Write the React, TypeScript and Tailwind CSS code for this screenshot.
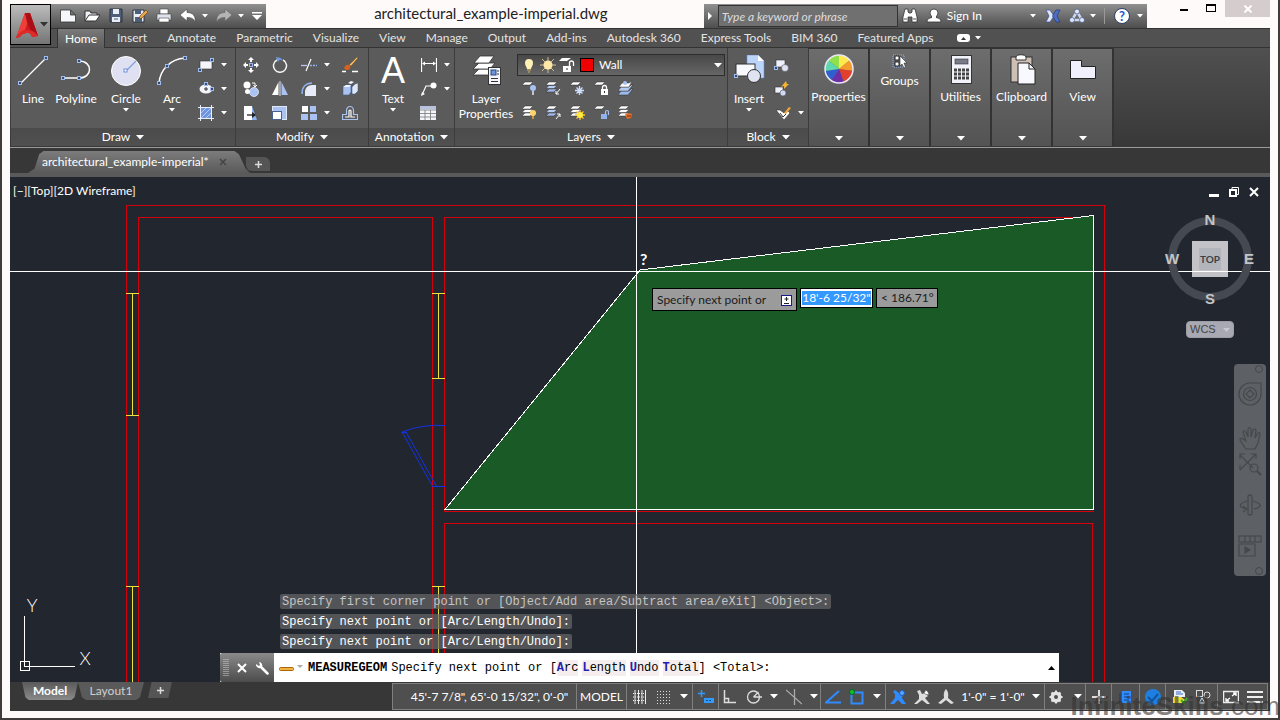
import { ReactNode } from "react";
import clsx from "clsx";

const ribbonTabs = [
  "Home",
  "Insert",
  "Annotate",
  "Parametric",
  "Visualize",
  "View",
  "Manage",
  "Output",
  "Add-ins",
  "Autodesk 360",
  "Express Tools",
  "BIM 360",
  "Featured Apps",
];

/* ---------- icon helpers ---------- */

function Icon({ size = 16, children }: { size?: number; children: ReactNode }) {
  return (
    <svg
      width={size}
      height={size}
      viewBox={`0 0 ${size} ${size}`}
      fill="none"
      className="shrink-0"
      aria-hidden="true"
    >
      {children}
    </svg>
  );
}

function Caret({ large = false }: { large?: boolean }) {
  return large ? (
    <svg width="8" height="5" viewBox="0 0 8 5" className="shrink-0" aria-hidden="true">
      <path d="M0 0h8L4 4.5z" fill="#fff" />
    </svg>
  ) : (
    <svg width="6" height="4" viewBox="0 0 6 4" className="shrink-0" aria-hidden="true">
      <path d="M0 0h6L3 3.5z" fill="#fff" />
    </svg>
  );
}

function Grip({ x, y }: { x: number; y: number }) {
  return <rect x={x + 0.5} y={y + 0.5} width="3" height="3" fill="#3c4a66" stroke="#9dbcf5" />;
}

/* a stack of sheets used by all layer tools */
function Sheets({ count = 3, blue = false }: { count?: number; blue?: boolean }) {
  return (
    <>
      {count > 2 && <path d="M4 9h8l-3 3H1z" fill={blue ? "#9db8ea" : "#fff"} stroke="#333" strokeWidth=".5" />}
      {count > 1 && <path d="M4 5.500h8l-3 3H1z" fill={blue ? "#b9cdf3" : "#fff"} stroke="#333" strokeWidth=".5" />}
      <path d="M4 2h8L9 5H1z" fill="#fff" stroke="#333" strokeWidth=".5" />
    </>
  );
}

/* ---------- quick access toolbar ---------- */

const quickTools: { name: string; icon: ReactNode }[] = [
  {
    name: "New",
    icon: <path d="M0.500 2h10l5 5v7H0.500zM10.500 2v5h5" fill="#f6f7fb" stroke="#333" strokeWidth=".8" />,
  },
  {
    name: "Open",
    icon: (
      <>
        <path d="M1 13V3h5l1 2h6v3" fill="#eef0f6" stroke="#333" />
        <path d="M1 13L5 7h11l-4 6z" fill="#fff" stroke="#333" />
      </>
    ),
  },
  {
    name: "Save",
    icon: (
      <>
        <path d="M2 1h12v13H2z" fill="#4d5f78" stroke="#2c3440" />
        <path d="M5 1h6v5H5zM4 9h8v5H4z" fill="#e9edf5" />
        <path d="M6 11h4" stroke="#4d5f78" />
      </>
    ),
  },
  {
    name: "Save As",
    icon: (
      <>
        <path d="M1 2h11v12H1z" fill="#e9edf5" stroke="#2c3440" />
        <path d="M3 2h6v4H3zM3 9h7v5H3z" fill="#4d5f78" />
        <path d="M7 11l1-3 6-6 2 2-6 6z" fill="#e9a64a" stroke="#5e3d12" strokeWidth=".6" />
      </>
    ),
  },
  {
    name: "Plot",
    icon: (
      <>
        <path d="M4 1h8v5H4z" fill="#fff" stroke="#444" strokeWidth=".6" />
        <path d="M1 6h14v6H1z" fill="#dfe3ec" stroke="#444" strokeWidth=".6" />
        <path d="M3 10h10v4H3z" fill="#fff" stroke="#444" strokeWidth=".6" />
      </>
    ),
  },
];

function QuickAccess() {
  return (
    <div className="flex h-6 items-center gap-2 bg-linear-to-b from-[#909090] to-[#4e4e4e] pr-1 pl-[50px]">
      {quickTools.map((tool) => (
        <button key={tool.name} aria-label={tool.name}>
          <Icon>{tool.icon}</Icon>
        </button>
      ))}
      <button aria-label="Undo" className="flex items-center gap-1.5">
        <Icon>
          <path
            d="M0 7l7-6v3.500c6 0 9 4 8 9.500-1-3-3-4.500-8-4.500V13z"
            fill="#fff"
            stroke="#444"
            strokeWidth=".6"
          />
        </Icon>
        <Caret />
      </button>
      <button aria-label="Redo" className="flex items-center gap-1.5">
        <Icon>
          <path
            d="M16 7L9 1v3.500c-6 0-9 4-8 9.500 1-3 3-4.500 8-4.500V13z"
            fill="#b4b4b4"
            stroke="#666"
            strokeWidth=".6"
          />
        </Icon>
        <Caret />
      </button>
      <button aria-label="Customize toolbar">
        <svg width="10" height="8" viewBox="0 0 10 8">
          <path d="M0 0h10v1.500H0zM0 3h10L5 8z" fill="#fff" />
        </svg>
      </button>
    </div>
  );
}

function TitleBar() {
  return (
    <header className="flex h-7 items-start">
      <div className="mt-1">
        <QuickAccess />
      </div>
      <h1 className="flex-1 pl-3 text-center text-[15px] leading-[26px] whitespace-nowrap text-[#222]">
        architectural_example-imperial.dwg
      </h1>
      <div className="mt-1 flex h-6 items-center bg-linear-to-b from-[#909090] to-[#4e4e4e]">
        <button aria-label="Collapse search" className="flex h-6 w-3.5 items-center justify-center">
          <svg width="5" height="8" viewBox="0 0 5 8">
            <path d="M0 0v8l4-4z" fill="#fff" />
          </svg>
        </button>
        <input
          aria-label="Search"
          placeholder="Type a keyword or phrase"
          className="h-[22px] w-[180px] border border-[#333] bg-[#707070] px-[3px] text-xs text-white italic placeholder:text-[#ddd]"
        />
        <button aria-label="Find" className="ml-1">
          <Icon>
            <path
              d="M3 1h3v3l1 1h2l1-1V1h3l2 8v5h-5V9H6v5H1V9z"
              fill="#fff"
              stroke="#333"
              strokeWidth=".8"
            />
            <path d="M2 11h3M11 11h3" stroke="#555" />
          </Icon>
        </button>
        <button className="ml-2 flex items-center gap-[5px] text-xs text-white">
          <Icon>
            <circle cx="8" cy="5" r="4" fill="#fff" stroke="#333" strokeWidth=".8" />
            <path d="M1 14c0-3 2-4 5-4.500V8h4v1.500c3 .5 5 1.500 5 4.500z" fill="#fff" stroke="#333" strokeWidth=".8" />
            <path d="M6 7h4v3H6z" fill="#fff" />
          </Icon>
          Sign In
        </button>
        <span className="ml-12">
          <Caret />
        </span>
        <button aria-label="Exchange apps" className="ml-[9px]">
          <Icon>
            <path d="M1 2h4l4 6-4 6H1l3-6z" fill="#dfe8fb" stroke="#3c4f88" strokeWidth=".7" />
            <path d="M15 2h-4L7.500 8 11 14h4l-3-6z" fill="#4b6fc4" stroke="#26397a" strokeWidth=".7" />
          </Icon>
        </button>
        <button aria-label="Share" className="ml-2 flex items-center gap-[5px]">
          <Icon>
            <path d="M8 3.500L3 12h10z" stroke="#c9d6f4" strokeWidth="2.500" />
            <circle cx="8" cy="3.500" r="2.500" fill="#dfe8fb" stroke="#42537e" strokeWidth=".7" />
            <circle cx="3" cy="12" r="2.500" fill="#dfe8fb" stroke="#42537e" strokeWidth=".7" />
            <circle cx="13" cy="12" r="2.500" fill="#dfe8fb" stroke="#42537e" strokeWidth=".7" />
          </Icon>
          <Caret />
        </button>
        <span className="ml-2 h-4 w-px bg-[#999]" />
        <button aria-label="Help" className="mr-1 ml-[9px] flex items-center gap-[7px]">
          <span className="flex size-4 items-center justify-center rounded-full border border-[#2d3d66] bg-white text-[13px] leading-none font-bold text-[#2456c4]">
            ?
          </span>
          <Caret />
        </button>
      </div>
      <div className="ml-[22px] flex items-start">
        <button aria-label="Minimize" className="flex h-4 w-[30px] items-end justify-center pb-[5px]">
          <span className="h-[2px] w-2 bg-black" />
        </button>
        <button aria-label="Maximize" className="flex h-4 w-6 items-center justify-center">
          <span className="h-2 w-2.5 border border-t-2 border-black" />
        </button>
        <button aria-label="Close" className="ml-[2px] flex h-[17px] w-[45px] items-center justify-center bg-[#d5cdcd]">
          <svg width="8" height="8" viewBox="0 0 8 8">
            <path d="M.5 .5l7 7M7.500 .5l-7 7" stroke="#fff" strokeWidth="2" />
          </svg>
        </button>
      </div>
    </header>
  );
}

function AppButton() {
  return (
    <button
      aria-label="Application menu"
      className="absolute top-1 left-0 z-10 flex size-[41px] items-center gap-px border border-black bg-linear-to-b from-[#bcbcbc] to-[#757575] pl-1"
    >
      <svg width="24" height="28" viewBox="0 0 24 28">
        <path d="M10 2h5l8 23-6 1q-1-5-6-4-5 1-6 4l-4 1z" fill="#cf1820" />
        <path d="M10 2L1 27q3-6 9-8l3-9z" fill="#ee4038" />
        <path d="M10 2h5l8 23-6-3-5-11z" fill="#a80f16" />
        <path d="M1 27q4-9 12-8 6 0 10 6l-6 1q-2-5-6-4-5 1-6 4z" fill="#de2a28" />
      </svg>
      <svg width="8" height="5" viewBox="0 0 8 5">
        <path d="M0 0h8L4 4.500z" fill="#333" />
      </svg>
    </button>
  );
}

function RibbonTabs() {
  return (
    <nav className="flex h-5 items-center border-t border-b border-[#333] bg-[#515151] pl-[47px] text-xs text-[#e4e4e4]">
      {ribbonTabs.map((tab, i) => (
        <button
          key={tab}
          className={clsx(
            "whitespace-nowrap",
            i === 0
              ? "mr-0.5 h-5 border border-b-0 border-[#333] bg-linear-to-b from-[#7a7a7a] to-[#5b5b5b] px-[7px] text-white"
              : "px-2.5",
          )}
        >
          {tab}
        </button>
      ))}
      <button aria-label="Minimize ribbon" className="ml-[13px] flex items-center gap-[5px]">
        <span className="flex h-2 w-[13px] items-center justify-center rounded-[3px] bg-white">
          <svg width="5" height="3" viewBox="0 0 5 3">
            <path d="M0 3h5L2.500 0z" fill="#333" />
          </svg>
        </span>
        <Caret />
      </button>
    </nav>
  );
}

/* ---------- ribbon ---------- */

function LargeTool({
  label,
  icon,
  caret = false,
  className,
}: {
  label: ReactNode;
  icon: ReactNode;
  caret?: boolean;
  className: string;
}) {
  return (
    <button className={clsx("flex flex-col items-center pt-[7px] text-xs leading-[15px] whitespace-nowrap", className)}>
      <Icon size={32}>{icon}</Icon>
      <span className="mt-1 mb-0.5">{label}</span>
      {caret && <Caret />}
    </button>
  );
}

function SmallTool({ label, icon, caret = false }: { label: string; icon: ReactNode; caret?: boolean }) {
  return (
    <button aria-label={label} className="flex h-6 items-center justify-center gap-[7px]">
      <Icon>{icon}</Icon>
      {caret && <Caret />}
    </button>
  );
}

function Panel({ title, className, children }: { title: string; className: string; children: ReactNode }) {
  return (
    <section className={clsx("flex shrink-0 flex-col border-r border-[#3c3c3c]", className)}>
      <div className="flex h-20 bg-[#5b5b5b]">{children}</div>
      <button className="flex h-[18px] items-center justify-center gap-1.5 bg-linear-to-b from-[#4b4b4b] to-[#505050] text-xs">
        {title}
        <Caret large />
      </button>
    </section>
  );
}

function DrawPanel() {
  return (
    <Panel title="Draw" className="w-[225px]">
      <LargeTool
        label="Line"
        className="w-11"
        icon={
          <>
            <path d="M4 28L28 4" stroke="#fff" strokeWidth="1.300" />
            <Grip x={1} y={26} />
            <Grip x={27} y={1} />
          </>
        }
      />
      <LargeTool
        label="Polyline"
        className="w-[42px]"
        icon={
          <>
            <path d="M3 23h16c14 0 14-17 0-17" stroke="#fff" strokeWidth="1.500" />
            <Grip x={1} y={21} />
            <Grip x={17} y={21} />
            <Grip x={17} y={4} />
          </>
        }
      />
      <LargeTool
        label="Circle"
        caret
        className="w-[58px]"
        icon={
          <>
            <circle cx="16" cy="16" r="14.500" fill="#dfe1f2" stroke="#fff" strokeWidth="1" />
            <path d="M16 16L26 6" stroke="#7f9fe0" strokeWidth="1.300" />
            <rect x="14" y="14" width="3" height="3" fill="#fff" stroke="#6f8fd8" />
          </>
        }
      />
      <LargeTool
        label="Arc"
        caret
        className="w-[34px]"
        icon={
          <>
            <path d="M3 28C4 15 14 4 29 3" stroke="#fff" strokeWidth="1.500" />
            <Grip x={1} y={26} />
            <Grip x={9} y={9} />
            <Grip x={27} y={1} />
          </>
        }
      />
      <div className="grid flex-1 content-start pt-[5px]">
        <SmallTool
          label="Rectangle"
          caret
          icon={
            <>
              <rect x="2" y="4" width="12" height="8" fill="#f4f5fb" stroke="#333" strokeWidth=".6" />
              <Grip x={0} y={11} />
              <Grip x={12} y={1} />
            </>
          }
        />
        <SmallTool
          label="Ellipse"
          caret
          icon={
            <>
              <ellipse cx="8" cy="8" rx="6.500" ry="4.500" fill="#f4f5fb" />
              <path d="M6 8h4M8 6v4" stroke="#333" />
              <Grip x={6} y={1} />
              <Grip x={12} y={6} />
            </>
          }
        />
        <SmallTool
          label="Hatch"
          caret
          icon={
            <>
              <rect x="3" y="3" width="10" height="10" fill="#6e95de" />
              <path d="M3 8l5-5M3 13L13 3M8 13l5-5" stroke="#b9cdf3" />
              <path d="M0 2.500h16M0 13.500h16M2.500 0v16M13.500 0v16" stroke="#e8eefc" />
            </>
          }
        />
      </div>
    </Panel>
  );
}

const modifyTools: { label: string; caret?: boolean; icon: ReactNode }[] = [
  {
    label: "Move",
    icon: (
      <>
        <path d="M8 0l3 3H9v2H7V3H5zM8 16l3-3H9v-2H7v2H5zM0 8l3-3v2h2v2H3v2zM16 8l-3-3v2h-2v2h2v2z" fill="#fff" />
        <rect x="6.500" y="6.500" width="3" height="3" stroke="#8fb2f0" />
      </>
    ),
  },
  {
    label: "Rotate",
    icon: (
      <>
        <path d="M5 3a6.500 6.500 0 1 0 6 0" stroke="#f4f4f4" strokeWidth="1.500" />
        <path d="M5 3c2-1.500 4-1 5 0" stroke="#6e9ae6" strokeWidth="1.500" />
        <path d="M4 0l5 1-3 4z" fill="#6e9ae6" />
      </>
    ),
  },
  {
    label: "Trim",
    caret: true,
    icon: (
      <>
        <path d="M0 8.500h6" stroke="#b9c8e8" strokeWidth="1.300" />
        <path d="M9 8.500h7" stroke="#8fb2f0" strokeWidth="1.300" strokeDasharray="2 1" />
        <path d="M5 14L10 2" stroke="#fff" strokeWidth="1.200" />
      </>
    ),
  },
  {
    label: "Erase",
    icon: (
      <>
        <path d="M15 0l1 1-7 8-2-1z" fill="#f4c06a" stroke="#7a4a10" strokeWidth=".5" />
        <path d="M2 11c2-4 4-4 6-2 1 3-1 4-4 4z" fill="#d9601d" />
        <path d="M0 14.500h4M10 14.500h6" stroke="#fff" strokeWidth="1.300" />
      </>
    ),
  },
  {
    label: "Copy",
    icon: (
      <>
        <circle cx="4" cy="4" r="3.500" fill="#fff" />
        <circle cx="11" cy="11" r="4.500" fill="#a9c2f2" stroke="#e8eefc" strokeWidth=".8" />
        <circle cx="4.500" cy="10.500" r="2.500" fill="#fff" />
        <path d="M9 2h3v3M10.500 4l1.500 2 2-2" stroke="#fff" />
      </>
    ),
  },
  {
    label: "Mirror",
    icon: (
      <>
        <path d="M6.500 1v13H0z" fill="#fff" />
        <path d="M9.500 1v13H16z" fill="#a9c2f2" />
        <path d="M8 0v15" stroke="#dfe8fb" />
      </>
    ),
  },
  {
    label: "Fillet",
    caret: true,
    icon: (
      <>
        <path d="M4 15V11c0-4 3-7 7-7h4v11z" fill="#e8ecf8" />
        <path d="M1 13C1 6 5 2 11 2" stroke="#8fb2f0" strokeWidth="1.500" />
      </>
    ),
  },
  {
    label: "Explode",
    icon: (
      <>
        <path d="M1 6l3-2h5v7l-2 3H1z" fill="#a9c2f2" stroke="#48628f" strokeWidth=".6" />
        <path d="M10 6l3-3 3-1v8l-3 3h-3z" fill="#dfe8fb" stroke="#48628f" strokeWidth=".6" />
        <path d="M1 6h6l2-2H4zM6 2l3-2 3 1-3 2z" fill="#f4f6fd" />
      </>
    ),
  },
  {
    label: "Stretch",
    icon: (
      <>
        <path d="M1 1h8v14H1z" fill="#fff" />
        <path d="M9 1l5 14H9z" fill="#8fb2f0" />
        <path d="M4 10h6" stroke="#222" strokeWidth="1.300" />
        <path d="M9 7l4 3-4 3z" fill="#222" />
      </>
    ),
  },
  {
    label: "Scale",
    icon: (
      <>
        <rect x=".5" y="1.500" width="14" height="13" fill="#a9c2f2" stroke="#dfe8fb" />
        <rect x=".5" y="6.500" width="9" height="8" fill="#fff" stroke="#48628f" />
      </>
    ),
  },
  {
    label: "Array",
    caret: true,
    icon: (
      <>
        <rect x="1" y="1" width="6" height="6" fill="#fff" />
        <rect x="9" y="1" width="6" height="6" fill="#a9c2f2" />
        <rect x="0" y="9" width="7" height="6" fill="#a9c2f2" />
        <rect x="9" y="9" width="7" height="6" fill="#a9c2f2" />
      </>
    ),
  },
  {
    label: "Offset",
    icon: (
      <>
        <path d="M.5 14.500v-5h4V5.500a3.500 4 0 0 1 7 0v4h4v5z" stroke="#a9c2f2" strokeWidth="1.200" />
        <path d="M3 12h4V6a1 1 0 0 1 2 0v6h4" stroke="#fff" strokeWidth="1.200" />
      </>
    ),
  },
];

function ModifyPanel() {
  return (
    <Panel title="Modify" className="w-[133px]">
      <div className="grid grid-cols-[30px_28px_42px_28px] content-start pt-[5px]">
        {modifyTools.map((tool) => (
          <SmallTool key={tool.label} {...tool} />
        ))}
      </div>
    </Panel>
  );
}

function AnnotationPanel() {
  return (
    <Panel title="Annotation" className="w-[86px]">
      <button className="flex w-12 flex-col items-center pt-[7px] text-xs leading-[15px]">
        <span aria-hidden="true" className="h-8 font-['Liberation_Sans'] text-[36px] leading-8">
          A
        </span>
        <span className="mt-1 mb-0.5">Text</span>
        <Caret />
      </button>
      <div className="grid flex-1 content-start pt-[5px]">
        <SmallTool
          label="Dimension"
          caret
          icon={
            <>
              <path d="M.5 1v14M15.500 1v14M2 6.500h12" stroke="#fff" strokeWidth="1.200" />
              <path d="M1 6.500l3-2v4zM15 6.500l-3-2v4z" fill="#fff" />
            </>
          }
        />
        <SmallTool
          label="Leader"
          caret
          icon={
            <>
              <path d="M1 14L5 5h6" stroke="#fff" strokeWidth="1.200" />
              <path d="M0 15l1-4 3 2z" fill="#fff" />
              <circle cx="12.500" cy="4.500" r="3" fill="#fff" />
            </>
          }
        />
        <div className="pl-[3px]">
          <SmallTool
            label="Table"
            icon={
              <>
                <rect x="0" y="1" width="16" height="14" fill="#f4f5fb" />
                <path d="M0 5h16M0 8.500h16M0 12h16M5 5v10M10.500 5v10" stroke="#777" strokeWidth=".8" />
                <path d="M0 1h16v3H0z" fill="#b9c2dc" />
              </>
            }
          />
        </div>
      </div>
    </Panel>
  );
}

const layerTools: { label: string; icon: ReactNode }[] = [
  {
    label: "Layer off",
    icon: (
      <>
        <Sheets count={1} />
        <circle cx="12" cy="8" r="3" fill="#a9c2f2" />
        <path d="M12 11v4" stroke="#dfe8fb" strokeWidth="1.500" />
      </>
    ),
  },
  {
    label: "Isolate",
    icon: (
      <>
        <Sheets blue />
        <path d="M15 9l-4 5M11 11v3h3" stroke="#fff" />
      </>
    ),
  },
  {
    label: "Freeze",
    icon: (
      <>
        <Sheets count={1} />
        <path d="M10.500 6v9M6 10.500h9M7.500 7.500l6 6M13.500 7.500l-6 6" stroke="#cfe0ff" strokeWidth="1.300" />
      </>
    ),
  },
  {
    label: "Lock",
    icon: (
      <>
        <Sheets count={1} />
        <rect x="8" y="9" width="7" height="6" fill="#fff" />
        <path d="M9.500 9V7.500a2 2 0 0 1 4 0V9" stroke="#fff" strokeWidth="1.300" />
        <path d="M11.500 11v2" stroke="#333" />
      </>
    ),
  },
  {
    label: "Make current",
    icon: (
      <>
        <path d="M4 11h8l3-3v2l-4 5H1z" fill="#9db8ea" stroke="#333" strokeWidth=".5" />
        <path d="M4 7h8l3-3v2l-4 5H1z" fill="#b9cdf3" stroke="#333" strokeWidth=".5" />
        <path d="M5 3h7l3-2-3 6H2z" fill="#fff" stroke="#333" strokeWidth=".5" />
        <circle cx="8" cy="3" r="2" fill="#a9c2f2" />
      </>
    ),
  },
  {
    label: "Turn all on",
    icon: (
      <>
        <Sheets />
        <circle cx="12" cy="9" r="3" fill="#ffd469" />
        <path d="M12 12v3" stroke="#f2a531" strokeWidth="1.500" />
      </>
    ),
  },
  {
    label: "Unisolate",
    icon: (
      <>
        <Sheets blue />
        <path d="M11 15l4-5M12 10h3v3" stroke="#fff" />
      </>
    ),
  },
  {
    label: "Thaw all",
    icon: (
      <>
        <Sheets />
        <path d="M11 6v10M6 11h10M7.500 7.500l7 7M14.500 7.500l-7 7" stroke="#ffbf2e" strokeWidth="1.300" />
        <circle cx="11" cy="11" r="3" fill="#ffee3d" />
      </>
    ),
  },
  {
    label: "Unlock",
    icon: (
      <>
        <Sheets count={1} />
        <rect x="8" y="10" width="6" height="5" fill="#8fb2f0" />
        <path d="M12.500 10V8a1.500 1.500 0 0 1 3 0v3" stroke="#a9c2f2" strokeWidth="1.200" />
      </>
    ),
  },
  {
    label: "Match layer",
    icon: (
      <>
        <Sheets />
        <path d="M8 10l3-1 4 1-1 4-4 1z" fill="#e0702a" />
        <path d="M10 12h4" stroke="#7a3208" />
      </>
    ),
  },
];

function LayersPanel() {
  return (
    <Panel title="Layers" className="w-[273px]">
      <LargeTool
        label={
          <>
            Layer
            <br />
            Properties
          </>
        }
        className="w-[62px]"
        icon={
          <>
            <path d="M9 14h16l-5 6H3z" fill="#fff" stroke="#333" strokeWidth=".8" />
            <path d="M9 8h16l-5 6H3z" fill="#fff" stroke="#333" strokeWidth=".8" />
            <path d="M10 1h14l-5 7H4z" fill="#fff" stroke="#333" strokeWidth=".8" />
            <rect x="18.500" y="12.500" width="12" height="17" fill="#f4f5fb" stroke="#333" />
            <rect x="21" y="15" width="5" height="5" fill="#6e95de" stroke="#27447d" />
            <path d="M27 16h2M27 19h2M21 23.500h7M21 26.500h7" stroke="#333" />
          </>
        }
      />
      <div className="flex flex-1 flex-col pt-1.5 pr-0.5">
        <div className="relative flex h-[22px] items-center gap-[3px] border border-[#2c2c2c] bg-linear-to-b from-[#484848] to-[#666] pl-[3px]">
          <Icon>
            <path d="M4 6a4 4 0 0 1 8 0c0 3-2 4-2 6H6c0-2-2-3-2-6z" fill="#fff0b5" />
            <path d="M6 13h4M7 15h2" stroke="#d8b35a" strokeWidth="1.200" />
          </Icon>
          <Icon>
            <path d="M8 0v16M0 8h16M2 2l12 12M14 2L2 14" stroke="#f0d79a" strokeWidth=".8" />
            <circle cx="8" cy="8" r="4.500" fill="#ffe9a8" />
          </Icon>
          <Icon>
            <path d="M3 1h9L8 4H0z" fill="#fff" />
            <rect x="4" y="9" width="8" height="6" fill="#fff" />
            <path d="M10.500 9V6a2 2 0 0 1 4 0v3" stroke="#fff" strokeWidth="1.300" />
            <path d="M8 11v2" stroke="#333" />
          </Icon>
          <span className="ml-0.5 size-3.5 border border-black bg-[#f00000]" />
          <select
            aria-label="Layer"
            className="h-5 flex-1 appearance-none bg-transparent pl-[2px] text-xs text-white"
          >
            <option>Wall</option>
          </select>
          <span className="pointer-events-none absolute right-[2px]">
            <Caret large />
          </span>
        </div>
        <div className="grid grid-cols-[repeat(5,24px)]">
          {layerTools.map((tool) => (
            <SmallTool key={tool.label} {...tool} />
          ))}
        </div>
      </div>
    </Panel>
  );
}

function BlockPanel() {
  return (
    <Panel title="Block" className="w-[81px]">
      <LargeTool
        label="Insert"
        caret
        className="w-[42px]"
        icon={
          <>
            <path d="M14 0h11l6 6v17H14z" fill="#bcd3fa" stroke="#6d8fd0" strokeWidth=".6" />
            <path d="M25 0v6h6z" fill="#fff" />
            <rect x="3" y="9" width="19" height="12" fill="#f8f9fe" stroke="#333" />
            <circle cx="21" cy="21" r="6.500" fill="#dfe3f2" stroke="#333" />
            <Grip x={1} y={19} />
          </>
        }
      />
      <div className="grid flex-1 content-start pt-[5px]">
        <div className="pl-[3px]">
          <SmallTool
            label="Create block"
            icon={
              <>
                <rect x="3" y="3" width="9" height="7" fill="#eef1fb" stroke="#333" strokeWidth=".6" />
                <circle cx="12" cy="11" r="3.500" fill="#dfe3f2" stroke="#555" strokeWidth=".6" />
                <Grip x={1} y={9} />
              </>
            }
          />
        </div>
        <div className="pl-[3px]">
          <SmallTool
            label="Edit block"
            icon={
              <>
                <rect x="2" y="6" width="8" height="6" fill="#eef1fb" stroke="#333" strokeWidth=".6" />
                <circle cx="10" cy="12" r="3" fill="#cdd9f7" stroke="#555" strokeWidth=".6" />
                <path d="M8 6l5-6 1 3 2 0-5 5 0-3z" fill="#f5b335" />
              </>
            }
          />
        </div>
        <SmallTool
          label="Edit attributes"
          caret
          icon={
            <>
              <path d="M1 5h4l4 3 3-3 3 3-6 7z" fill="#fff" stroke="#333" strokeWidth=".6" />
              <path d="M5 8l3 4 3-3" stroke="#333" />
              <path d="M9 8l5-6 2 1-5 6z" fill="#f0a437" />
            </>
          }
        />
      </div>
    </Panel>
  );
}

function CollapsedPanel({ label, icon, small = false }: { label: string; icon: ReactNode; small?: boolean }) {
  return (
    <button className="mr-0.5 flex w-[59px] shrink-0 flex-col items-center border-t border-[#333] bg-linear-to-b from-[#6d6d6d] to-[#535353] pt-[5px] pb-[5px] text-xs leading-[15px]">
      <Icon size={small ? 16 : 32}>{icon}</Icon>
      <span className="mt-[3px]">{label}</span>
      <span className="mt-auto">
        <Caret large />
      </span>
    </button>
  );
}

const wheel = [
  { d: "M16 15L5 6A14 14 0 0 1 16 1z", fill: "#8fe04a" },
  { d: "M16 15V1a14 14 0 0 1 11 5z", fill: "#ffe94d" },
  { d: "M16 15L27 6a14 14 0 0 1 3 11z", fill: "#f59c2c" },
  { d: "M16 15l14 2a14 14 0 0 1-9 12z", fill: "#e0402c" },
  { d: "M16 15l5 14a14 14 0 0 1-13-2z", fill: "#6d2fa8" },
  { d: "M16 15L8 27a14 14 0 0 1-6-10z", fill: "#2f5ed0" },
  { d: "M16 15L2 17A14 14 0 0 1 5 6z", fill: "#5fd8b0" },
];

function Ribbon() {
  return (
    <div className="flex h-[100px] border-b border-[#9a9a9a] bg-linear-to-b from-[#505050] to-[#383838] pb-px pl-px text-white">
      <DrawPanel />
      <ModifyPanel />
      <AnnotationPanel />
      <LayersPanel />
      <BlockPanel />
      <div className="flex bg-[#333]">
        <CollapsedPanel
          label="Properties"
          icon={
            <>
              {wheel.map((part) => (
                <path key={part.fill} d={part.d} fill={part.fill} />
              ))}
              <circle cx="16" cy="15" r="14" stroke="#e9e9f3" strokeWidth="1.500" />
            </>
          }
        />
        <CollapsedPanel
          small
          label="Groups"
          icon={
            <>
              <rect x="1" y="1" width="11" height="12" stroke="#8fb2f0" strokeDasharray="1 1" />
              <rect x="3" y="2" width="4" height="4" fill="#fff" stroke="#222" />
              <rect x="3" y="8" width="4" height="4" fill="#fff" stroke="#222" />
              <path d="M8 2v10l2-2 2 4 1.500-1L12 9h3z" fill="#fff" stroke="#333" strokeWidth=".6" />
            </>
          }
        />
        <CollapsedPanel
          label="Utilities"
          icon={
            <>
              <rect x="6.500" y="1.500" width="20" height="28" fill="#f1f2fa" stroke="#333" />
              <rect x="10" y="5" width="13" height="5" fill="#777b88" stroke="#333" strokeWidth=".6" />
              <path
                d="M9 16h3M13 16h3M17 16h3M21 16h3M9 20h3M13 20h3M17 20h3M21 20h3M9 24h3M13 24h3M17 24h3M21 24h3"
                stroke="#444"
                strokeWidth="3"
              />
            </>
          }
        />
        <CollapsedPanel
          label="Clipboard"
          icon={
            <>
              <rect x="5" y="3" width="21" height="25" fill="#cdbfb4" stroke="#333" />
              <path d="M10 3c0-3 10-3 10 0v3H10z" fill="#fff" stroke="#333" />
              <path d="M12 9h11l6 6v15H12z" fill="#f8f9fe" stroke="#222" />
              <path d="M23 9v6h6" stroke="#222" />
            </>
          }
        />
        <CollapsedPanel
          label="View"
          icon={<path d="M3.500 6.500h11v6h14v12h-25z" fill="#eff0fb" stroke="#222" />}
        />
      </div>
    </div>
  );
}

/* ---------- file tabs ---------- */

function FileTabs() {
  return (
    <div className="flex h-[29px] items-end border-b-4 border-[#5a5a5a] bg-[#373737] pl-[18px] text-xs text-white">
      <div className="flex h-[22px] w-[222px] items-center bg-linear-to-b from-[#7c7c7c] to-[#5a5a5a] pl-3.5 [clip-path:polygon(0_100%,3%_80%,5%_15%,7%_0,93%_0,95%_15%,98%_80%,100%_100%)]">
        <button>architectural_example-imperial*</button>
        <button aria-label="Close file" className="ml-2.5">
          <svg width="8" height="8" viewBox="0 0 8 8">
            <path d="M1 1l6 6M7 1L1 7" stroke="#444" strokeWidth="1.500" />
          </svg>
        </button>
      </div>
      <button
        aria-label="New file"
        className="mb-0.5 ml-[-4px] flex h-3.5 w-6 items-center justify-center rounded-tr-md rounded-bl-md bg-[#555]"
      >
        <Plus />
      </button>
    </div>
  );
}

function Plus() {
  return (
    <svg width="7" height="7" viewBox="0 0 7 7">
      <path d="M3.500 0v7M0 3.500h7" stroke="#ddd" strokeWidth="1.500" />
    </svg>
  );
}

/* ---------- drawing area ---------- */

function FloorPlan() {
  return (
    <svg
      viewBox="10 177 1260 505"
      preserveAspectRatio="xMinYMin slice"
      className="absolute inset-0 size-full"
      fill="none"
      role="img"
      aria-label="Floor plan"
    >
      {/* walls */}
      <g fill="#d3000c">
        <rect x="126" y="205" width="980" height="1" />
        <rect x="126" y="205" width="1" height="500" />
        <rect x="1104" y="205" width="1" height="500" />
        <rect x="138" y="217" width="295" height="1" />
        <rect x="138" y="217" width="1" height="500" />
        <rect x="432" y="217" width="1" height="500" />
        <rect x="444" y="217" width="650" height="1" />
        <rect x="444" y="217" width="1" height="295" />
        <rect x="444" y="511" width="650" height="1" />
        <rect x="444" y="523" width="650" height="1" />
        <rect x="444" y="523" width="1" height="200" />
        <rect x="1092" y="523" width="1" height="200" />
      </g>

      {/* windows */}
      <g stroke="#f2e03a">
        <path d="M126 293.500h13M126 415.500h13M132.500 293v122" />
        <path d="M432 293.500h13M432 378.500h13M438.500 293v85" />
        <path d="M126 586.500h13M132.500 586v114M432 586.500h13M438.500 586v114" />
      </g>

      {/* door */}
      <g stroke="#1233e6">
        <path d="M402 432l31 55M406 432l31 55M401.500 432.500h5M402 432q20-8 43-6.500M433 486.500h12" />
      </g>

      {/* measured area */}
      <path d="M1093.500 215.500L640 270 445 509.500H1093.500Z" fill="#195a26" stroke="#fff" shapeRendering="crispEdges" />

      {/* crosshair */}
      <path d="M636.500 177v523M10 271.500h1800" stroke="#fff" />
    </svg>
  );
}

function DynamicInput() {
  return (
    <>
      <span className="absolute top-[73px] left-[630px] text-base leading-[18px] font-bold text-white">?</span>
      <div className="absolute top-[111px] left-[642px] flex items-start gap-[3px] text-xs text-[#1c1c1c]">
        <div className="flex h-[23px] w-[145px] items-center justify-between border border-black bg-[#9b9b9b] px-1">
          <label htmlFor="distance" className="whitespace-nowrap">
            Specify next point or
          </label>
          <svg width="11" height="11" viewBox="0 0 11 11" className="mt-0.5">
            <rect x=".5" y=".5" width="10" height="10" fill="#fff" stroke="#1a1a8c" />
            <path d="M5.500 2v4M3.500 4h4M3 8.500h5" stroke="#222" />
          </svg>
        </div>
        <div className="h-5 w-[73px] border border-black bg-white px-px py-0.5">
          <input
            id="distance"
            readOnly
            value={`18'-6 25/32"`}
            className="block h-3.5 w-full bg-[#3399ff] text-center text-xs leading-3.5 text-white"
          />
        </div>
        <output className="h-5 w-[62px] border border-black bg-[#9b9b9b] pl-1 leading-[18px]">
          &lt; 186.71°
        </output>
      </div>
    </>
  );
}

function ViewCube() {
  return (
    <div className="absolute top-[33px] right-[15px] flex w-[90px] flex-col items-center">
      <svg width="90" height="98" viewBox="0 0 90 98" className="font-['Liberation_Sans'] font-bold">
        <circle cx="45" cy="49" r="38" stroke="#454951" strokeWidth="8" fill="none" />
        <rect x="27" y="31" width="36" height="36" fill="#c3c3c7" />
        <rect x="34" y="38" width="22" height="22" fill="#b2b6bc" />
        <text x="45" y="53" fontSize="10" textAnchor="middle" fill="#3c4048" className="font-['Lato']">
          TOP
        </text>
        <g fontSize="15" textAnchor="middle" fill="#c2c4c8">
          <text x="45" y="15">
            N
          </text>
          <text x="45" y="94">
            S
          </text>
          <text x="7" y="54">
            W
          </text>
          <text x="84" y="54">
            E
          </text>
        </g>
        <path d="M27 61.500h36" stroke="#fff" />
      </svg>
      <button className="mt-[13px] flex h-[17px] w-12 items-center justify-between rounded-[4px] border border-[#9c9ca6] bg-[#a9a9b4] px-[3px] font-['Liberation_Sans'] text-[11px] text-[#444]">
        WCS
        <svg width="7" height="4" viewBox="0 0 7 4">
          <path d="M0 0h7L3.500 4z" fill="#c9c9d2" />
        </svg>
      </button>
    </div>
  );
}

const navTools: { label: string; height: string; icon: ReactNode }[] = [
  {
    label: "Steering wheel",
    height: "h-11",
    icon: (
      <>
        <path d="M12 1h11v11a11 11 0 1 1-11-11z" />
        <circle cx="12" cy="12" r="6.500" />
        <path d="M12 8l4 4-4 4-4-4z" />
      </>
    ),
  },
  {
    label: "Pan",
    height: "h-[26px]",
    icon: (
      <path d="M8 23L2 14q0-3 3-1l3 2L5 6q1-3 3 0l2 5V3q1-3 3 0v8l2-7q2-2 3 0l-1 8 3-5q2-1 2 1l-2 9-3 6z" />
    ),
  },
  {
    label: "Zoom",
    height: "h-[41px]",
    icon: (
      <>
        <path d="M2 3l13 13M18 2L2 18M2 7V2h5M13 2h5v5M2 13v5" />
        <circle cx="16" cy="16" r="4" />
        <path d="M19 19l4 4" strokeWidth="2" />
      </>
    ),
  },
  {
    label: "Orbit",
    height: "h-[41px]",
    icon: (
      <>
        <path d="M10 3q2-2 4 0v18q-2 2-4 0z" />
        <path d="M9 8c-9 3-9 6 0 8M15 8c9 3 10 6 1 8M5 13l4 3-4 3" />
      </>
    ),
  },
  {
    label: "Show motion",
    height: "h-6",
    icon: (
      <>
        <rect x="1" y="2" width="22" height="6" />
        <path d="M7 2v6M12 2v6M17 2v6M1 10h16v12H1z" />
        <path d="M7 13l5 3-5 3z" fill="#45484d" />
      </>
    ),
  },
];

function NavBar() {
  return (
    <div className="absolute top-[187px] right-1 flex h-[212px] w-8 flex-col items-center justify-between rounded-[4px] bg-[#5d6064] py-px">
      <span className="mr-[3px] size-2 self-end rounded-full border border-[#45484d]" />
      <div className="flex flex-col items-center">
        {navTools.map((tool) => (
          <button key={tool.label} aria-label={tool.label} className={clsx("flex items-start", tool.height)}>
            <svg width="24" height="24" viewBox="0 0 24 24" fill="none" stroke="#45484d" strokeWidth="1.200">
              {tool.icon}
            </svg>
          </button>
        ))}
      </div>
      <span className="mr-[3px] size-2 self-end rounded-full border border-[#45484d]" />
    </div>
  );
}

function History() {
  const lines = [
    "Specify first corner point or [Object/Add area/Subtract area/eXit] <Object>:",
    "Specify next point or [Arc/Length/Undo]:",
    "Specify next point or [Arc/Length/Undo]:",
  ];
  return (
    <ul className="flex flex-col items-start gap-[5px] pb-1 pl-[60px] text-white">
      {lines.map((line, i) => (
        <li
          key={i}
          className={clsx("h-[15px] rounded-xs bg-[#6a6a6ab0] px-[2px] leading-4 whitespace-pre", i === 0 && "text-[#c4c4c4]")}
        >
          {line}
        </li>
      ))}
    </ul>
  );
}

function CommandLine() {
  return (
    <div className="absolute right-[211px] bottom-0 left-[210px] font-['Liberation_Mono',monospace] text-xs">
      <History />
      <div className="flex h-[29px] items-center bg-white text-black">
        <div className="flex h-full w-[54px] items-center gap-2 rounded-l-xs bg-linear-to-b from-[#8b8b8b] to-[#4c4c4c] pl-[3px]">
          <svg width="6" height="18" viewBox="0 0 6 18">
            <path d="M1 0v18M3 0v18M5 0v18" stroke="#ccc" strokeDasharray="1 1" />
          </svg>
          <button aria-label="Close command line">
            <svg width="10" height="10" viewBox="0 0 10 10">
              <path d="M1 1l8 8M9 1L1 9" stroke="#fff" strokeWidth="2" />
            </svg>
          </button>
          <button aria-label="Customize">
            <svg width="14" height="14" viewBox="0 0 14 14" fill="none">
              <path d="M6 6l6.500 6.500" stroke="#fff" strokeWidth="2.500" strokeLinecap="round" />
              <path d="M1 3l3 2 1-1-1-3a3.500 3.500 0 0 1 3 5 3.500 3.500 0 0 1-6-3z" fill="#fff" />
            </svg>
          </button>
        </div>
        <svg width="24" height="8" viewBox="0 0 24 8" className="mx-[5px]">
          <rect x=".5" y="3.500" width="14" height="3" rx="1" fill="#f3b13f" stroke="#a8660e" />
          <path d="M18 1h6l-3 3z" fill="#aaa" />
        </svg>
        <p className="flex-1 whitespace-pre">
          <b>MEASUREGEOM</b>
          <span className="ml-1">Specify next point or [</span>
          {["Arc", "Length", "Undo", "Total"].map((option, i) => (
            <button key={option} className={clsx("bg-[#f6eeee]", i > 0 && "ml-1")}>
              <b className="text-[#2222b0]">{option[0]}</b>
              {option.slice(1)}
            </button>
          ))}
          {"] <Total>:"}
        </p>
        <button aria-label="Show history" className="mr-1">
          <svg width="7" height="4" viewBox="0 0 7 4">
            <path d="M0 4h7L3.500 0z" fill="#000" />
          </svg>
        </button>
      </div>
    </div>
  );
}

function Canvas() {
  return (
    <main className="relative min-h-[420px] flex-1 overflow-hidden bg-[#22262e]">
      <FloorPlan />
      <span className="absolute top-1.5 left-[3px] text-xs text-white">[−][Top][2D Wireframe]</span>
      <div className="absolute top-2.5 right-[11px] flex items-center gap-2.5">
        <button aria-label="Minimize view">
          <svg width="10" height="10" viewBox="0 0 10 10">
            <path d="M0 7h10v3H0z" fill="#fff" />
          </svg>
        </button>
        <button aria-label="Restore view">
          <svg width="10" height="10" viewBox="0 0 10 10" fill="none" stroke="#fff">
            <path d="M3 2V.5h6.500v7H8" />
            <rect x="1" y="3" width="6" height="6" strokeWidth="2" />
          </svg>
        </button>
        <button aria-label="Close view">
          <svg width="10" height="10" viewBox="0 0 10 10">
            <path d="M1 1l8 8M9 1L1 9" stroke="#fff" strokeWidth="2" />
          </svg>
        </button>
      </div>
      <DynamicInput />
      <ViewCube />
      <NavBar />
      <svg
        width="80"
        height="84"
        viewBox="0 0 80 84"
        fill="none"
        className="absolute bottom-2 left-2 font-['Lato'] font-light"
      >
        <path d="M6.500 26v50H57" stroke="#fff" shapeRendering="crispEdges" />
        <rect x="2.500" y="71.500" width="9" height="9" stroke="#fff" shapeRendering="crispEdges" />
        <text x="14" y="22" textAnchor="middle" fontSize="18" fill="#fff">
          Y
        </text>
        <text x="67" y="75" textAnchor="middle" fontSize="18" fill="#fff">
          X
        </text>
      </svg>
      <CommandLine />
    </main>
  );
}

/* ---------- status bar ---------- */

function StatusTool({ label, children }: { label: string; children: ReactNode }) {
  return (
    <button aria-label={label} className="flex h-full items-center justify-center">
      <Icon>{children}</Icon>
    </button>
  );
}

function Cell({ className, children }: { className: string; children: ReactNode }) {
  return (
    <div className={clsx("flex h-full shrink-0 items-center justify-center border-l border-[#808080] bg-[#4f4f4f]", className)}>
      {children}
    </div>
  );
}

function LayoutTabs() {
  return (
    <div className="flex h-[18px] items-stretch self-start pl-3 text-xs text-[#d0d0d0]">
      <button className="w-14 bg-linear-to-b from-[#5a5a5a] to-[#8a8a8a] font-bold text-white [clip-path:polygon(0_0,100%_0,94%_85%,88%_100%,12%_100%,6%_85%)]">
        Model
      </button>
      <button className="w-[66px] bg-[#5a5a5a] [clip-path:polygon(0_0,100%_0,94%_85%,88%_100%,12%_100%,6%_85%)]">
        Layout1
      </button>
      <button
        aria-label="New layout"
        className="ml-1 flex h-4 w-6 items-center justify-center bg-[#555] [clip-path:polygon(15%_0,100%_0,85%_100%,0_100%)]"
      >
        <Plus />
      </button>
    </div>
  );
}

function StatusBar() {
  return (
    <footer className="flex h-[29px] items-center justify-between bg-[#373737] text-white">
      <LayoutTabs />
      <div className="mr-0.5 flex h-[27px] items-stretch border-y border-r border-[#808080] text-xs whitespace-nowrap">
        <Cell className="w-[184px] pl-2.5">45'-7 7/8", 65'-0 15/32", 0'-0"</Cell>
        <Cell className="w-[50px]">
          <button>MODEL</button>
        </Cell>
        <Cell className="w-[66px] gap-2">
          <StatusTool label="Grid">
            <path d="M3 1v14M6.500 1v14M10 1v14M13.500 1v14" stroke="#eee" />
            <path d="M1 4.500h14M1 8h14M1 11.500h14" stroke="#eee" strokeDasharray="1 1" />
          </StatusTool>
          <StatusTool label="Snap">
            <path d="M1 2.500h14M1 5.500h14M1 8.500h14M1 11.500h14M1 14.500h14" stroke="#ddd" strokeDasharray="1 2" />
          </StatusTool>
          <Caret large />
        </Cell>
        <Cell className="w-[26px]">
          <StatusTool label="Dynamic input">
            <path d="M3.500 1v7M0 4.500h7" stroke="#2f9bff" strokeWidth="1.500" />
            <rect x="6" y="9" width="10" height="5" fill="#2f9bff" />
            <path d="M8 11.500h6" stroke="#1c4f88" strokeDasharray="2 1" />
          </StatusTool>
        </Cell>
        <Cell className="w-[102px] gap-2">
          <StatusTool label="Ortho">
            <path d="M2.500 1v12.500H14M2.500 9.500h4v4" stroke="#ddd" strokeWidth="1.500" />
          </StatusTool>
          <StatusTool label="Polar tracking">
            <circle cx="7.500" cy="8" r="6" stroke="#ddd" strokeWidth="1.300" />
            <path d="M7.500 8l5-5M7.500 8H16" stroke="#ddd" strokeWidth="1.300" />
          </StatusTool>
          <Caret large />
          <StatusTool label="Isometric drafting">
            <path d="M8.500 0v16M0 1l16 14" stroke="#aaa" strokeWidth="1.300" />
          </StatusTool>
          <Caret large />
        </Cell>
        <Cell className="w-[65px] gap-2">
          <StatusTool label="Object snap tracking">
            <path d="M14 2L1 13.500h15" stroke="#2f8bff" strokeWidth="2" />
          </StatusTool>
          <StatusTool label="Object snap">
            <rect x="2.500" y="3.500" width="11" height="11" stroke="#2f8bff" strokeWidth="2" />
            <circle cx="3" cy="3" r="2.500" fill="#18c020" stroke="#063" />
          </StatusTool>
          <Caret large />
        </Cell>
        <Cell className="w-[159px] gap-2">
          <StatusTool label="Annotation visibility">
            <path d="M0 15l5-6V5l-2-2 2-2 4 3 3-3 3 3-3 4v1l4 6h-4l-4-4-4 4z" fill="#2f8bff" />
            <circle cx="12" cy="4" r="2.500" fill="#5aa5ff" stroke="#1d5cb8" />
          </StatusTool>
          <StatusTool label="Auto scale">
            <path d="M0 15l5-5V6L3 2l3-1 2 4 3-1 3 3-3 2 5 6h-3l-5-4-5 4z" fill="#ddd" />
            <path d="M10 4l2-3 2 2 1 3-4-1z" fill="#fff" stroke="#555" strokeWidth=".6" />
          </StatusTool>
          <button className="flex h-full items-center gap-[7px]">
            <Icon>
              <path d="M8 0q3 3 2 9l6 5-3 1-5-4-5 4-3-1 6-5Q5 3 8 0z" fill="#ddd" />
            </Icon>
            1'-0" = 1'-0"
            <Caret large />
          </button>
        </Cell>
        <Cell className="w-[41px] gap-2.5">
          <StatusTool label="Workspace">
            <circle cx="8" cy="8" r="4" stroke="#e4e4e4" strokeWidth="3" />
            <path d="M8 1.500v13M1.500 8h13M3.500 3.500l9 9M12.500 3.500l-9 9" stroke="#e4e4e4" strokeWidth="2" />
            <circle cx="8" cy="8" r="2" fill="#4f4f4f" />
          </StatusTool>
          <Caret large />
        </Cell>
        <Cell className="w-[26px]">
          <StatusTool label="Annotation monitor">
            <path d="M8 1v14M1 8h14" stroke="#ddd" strokeWidth="2" />
          </StatusTool>
        </Cell>
        <Cell className="w-7">
          <StatusTool label="Quick properties">
            <path d="M4 2h9v12H4z" fill="#2f8bff" />
            <path d="M2 4v9M6 5h5M6 8h5M6 11h5" stroke="#123f7c" />
          </StatusTool>
        </Cell>
        <Cell className="w-[26px]">
          <StatusTool label="Graphics performance">
            <circle cx="8" cy="8" r="8" fill="#1f7fe0" />
            <path d="M3 8l4 4 6-7" stroke="#14539c" strokeWidth="2" />
          </StatusTool>
        </Cell>
        <Cell className="w-[52px] gap-[7px]">
          <StatusTool label="Trusted file">
            <path d="M2 1h8l3 3v4H2z" fill="#eee" />
            <path d="M4 3h5M4 5h7" stroke="#2f6bd0" />
            <path d="M1 8h8l4 3-3 3H1z" fill="#f2dc2c" />
            <path d="M9 11l3 3 3-5" stroke="#38b026" strokeWidth="2" />
          </StatusTool>
          <StatusTool label="Isolate objects">
            <rect x="1.500" y="1.500" width="6" height="6" stroke="#ddd" />
            <circle cx="12" cy="6" r="3" stroke="#ddd" />
            <path d="M7 9l3 5H4z" stroke="#ddd" />
          </StatusTool>
        </Cell>
        <Cell className="w-[50px] gap-2">
          <StatusTool label="Clean screen">
            <rect x=".5" y="2.500" width="15" height="11" stroke="#eee" strokeWidth="1.500" />
            <path d="M9 7l4-3M3 12l4-3M10 4h3v3M3 9v3h3" stroke="#fff" strokeWidth="1.300" />
          </StatusTool>
          <StatusTool label="Customization">
            <path d="M0 3h16M0 8h16M0 13h16" stroke="#eee" strokeWidth="2" />
          </StatusTool>
        </Cell>
      </div>
    </footer>
  );
}

export default function App() {
  return (
    <div className="relative min-h-screen bg-[#403c3c] px-0.5 pb-0.5 font-['Lato','Noto_Sans',sans-serif]">
      <div className="flex h-[calc(100vh-2px)] flex-col bg-[#fffafa] px-2 pb-[7px]">
        <div className="relative">
          <AppButton />
          <TitleBar />
          <RibbonTabs />
          <Ribbon />
        </div>
        <FileTabs />
        <Canvas />
        <StatusBar />
      </div>
      <p className="pointer-events-none absolute right-0 bottom-0 font-['Liberation_Sans'] text-[26px] leading-7 text-[#33333399]">
        <b>InfiniteSkills</b>.com
      </p>
    </div>
  );
}
